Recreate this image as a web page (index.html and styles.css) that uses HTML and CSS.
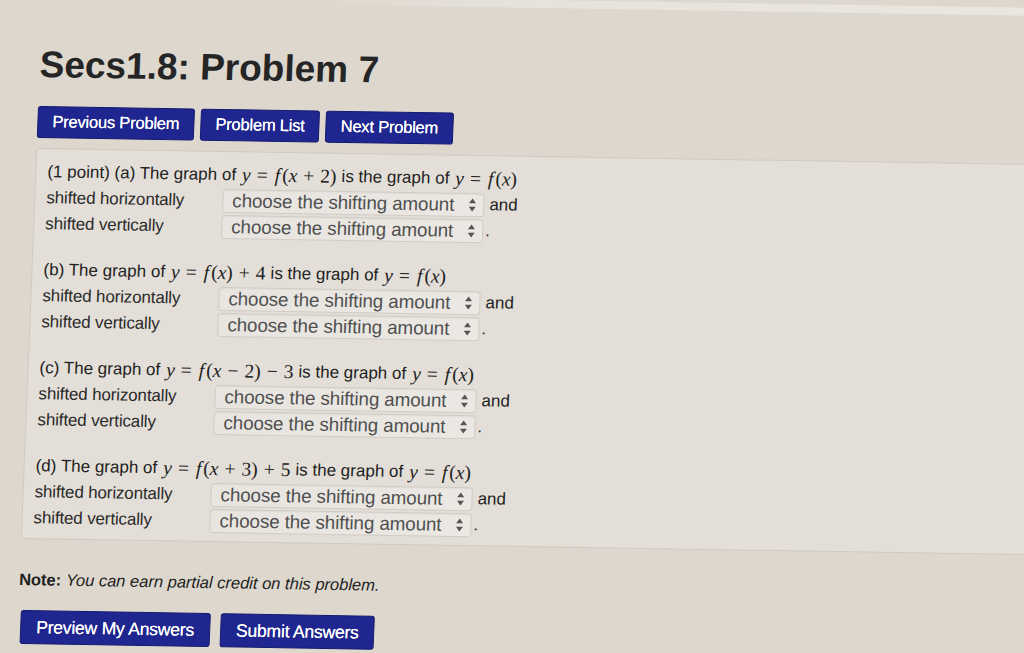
FILE: index.html
```html
<!DOCTYPE html>
<html lang="en">
<head>
<meta charset="utf-8">
<title>Secs1.8: Problem 7</title>
<link rel="stylesheet" href="styles.css">
</head>
<body>
<div class="page">
  <div class="topband"></div>
  <h1 class="title">Secs1.8: Problem 7</h1>
  <div class="nav">
    <button class="btn">Previous Problem</button>
    <button class="btn">Problem List</button>
    <button class="btn">Next Problem</button>
  </div>

  <div class="problem">
    <div class="part">
      <div class="row">(1 point) (a) The graph of <span class="m"><i>y</i><span class="op">=</span><i class="f">f</i>(<i>x</i><span class="op">+</span>2)</span> is the graph of <span class="m"><i>y</i><span class="op">=</span><i class="f">f</i>(<i>x</i>)</span></div>
      <div class="row"><span class="lbl">shifted horizontally</span><span class="sel">choose the shifting amount<svg class="arr" viewBox="0 0 8 14"><path d="M4 0.5L7.5 5.2H0.5Z M4 13.5L7.5 8.8H0.5Z"/></svg></span><span class="after">and</span></div>
      <div class="row"><span class="lbl">shifted vertically</span><span class="sel">choose the shifting amount<svg class="arr" viewBox="0 0 8 14"><path d="M4 0.5L7.5 5.2H0.5Z M4 13.5L7.5 8.8H0.5Z"/></svg></span><span class="dot">.</span></div>
    </div>
    <div class="part">
      <div class="row">(b) The graph of <span class="m"><i>y</i><span class="op">=</span><i class="f">f</i>(<i>x</i>)<span class="op">+</span>4</span> is the graph of <span class="m"><i>y</i><span class="op">=</span><i class="f">f</i>(<i>x</i>)</span></div>
      <div class="row"><span class="lbl">shifted horizontally</span><span class="sel">choose the shifting amount<svg class="arr" viewBox="0 0 8 14"><path d="M4 0.5L7.5 5.2H0.5Z M4 13.5L7.5 8.8H0.5Z"/></svg></span><span class="after">and</span></div>
      <div class="row"><span class="lbl">shifted vertically</span><span class="sel">choose the shifting amount<svg class="arr" viewBox="0 0 8 14"><path d="M4 0.5L7.5 5.2H0.5Z M4 13.5L7.5 8.8H0.5Z"/></svg></span><span class="dot">.</span></div>
    </div>
    <div class="part">
      <div class="row">(c) The graph of <span class="m"><i>y</i><span class="op">=</span><i class="f">f</i>(<i>x</i><span class="op">&minus;</span>2)<span class="op">&minus;</span>3</span> is the graph of <span class="m"><i>y</i><span class="op">=</span><i class="f">f</i>(<i>x</i>)</span></div>
      <div class="row"><span class="lbl">shifted horizontally</span><span class="sel">choose the shifting amount<svg class="arr" viewBox="0 0 8 14"><path d="M4 0.5L7.5 5.2H0.5Z M4 13.5L7.5 8.8H0.5Z"/></svg></span><span class="after">and</span></div>
      <div class="row"><span class="lbl">shifted vertically</span><span class="sel">choose the shifting amount<svg class="arr" viewBox="0 0 8 14"><path d="M4 0.5L7.5 5.2H0.5Z M4 13.5L7.5 8.8H0.5Z"/></svg></span><span class="dot">.</span></div>
    </div>
    <div class="part">
      <div class="row">(d) The graph of <span class="m"><i>y</i><span class="op">=</span><i class="f">f</i>(<i>x</i><span class="op">+</span>3)<span class="op">+</span>5</span> is the graph of <span class="m"><i>y</i><span class="op">=</span><i class="f">f</i>(<i>x</i>)</span></div>
      <div class="row"><span class="lbl">shifted horizontally</span><span class="sel">choose the shifting amount<svg class="arr" viewBox="0 0 8 14"><path d="M4 0.5L7.5 5.2H0.5Z M4 13.5L7.5 8.8H0.5Z"/></svg></span><span class="after">and</span></div>
      <div class="row"><span class="lbl">shifted vertically</span><span class="sel">choose the shifting amount<svg class="arr" viewBox="0 0 8 14"><path d="M4 0.5L7.5 5.2H0.5Z M4 13.5L7.5 8.8H0.5Z"/></svg></span><span class="dot">.</span></div>
    </div>
  </div>

  <p class="note"><b>Note:</b> <em>You can earn partial credit on this problem.</em></p>

  <div class="actions">
    <button class="btn btn-lg">Preview My Answers</button>
    <button class="btn btn-lg">Submit Answers</button>
  </div>
</div>
</body>
</html>
```

FILE: styles.css
```css
html, body {
  margin: 0;
  padding: 0;
  height: 100%;
  overflow: hidden;
  background: #ddd7cd;
}

.page {
  width: 1200px;
  min-height: 760px;
  padding-left: 40px;
  background: #ddd7cd;
  font-family: "Liberation Sans", Arial, sans-serif;
  color: #222;
  transform-origin: 40px 65px;
  transform: matrix(1, 0.016, -0.04, 1, 0, 0);
  box-sizing: border-box;
}

.topband {
  height: 8px;
  margin: -8px 0 0 260px;
  background: linear-gradient(90deg, rgba(233,229,222,0) 0%, #e7e3dc 25%, #eae7e1 100%);
}

.title {
  margin: 45px 0 0 0;
  font-size: 37px;
  line-height: 40px;
  font-weight: bold;
  color: #252525;
}

.nav {
  display: flex;
  gap: 6px;
  margin-top: 21px;
}

.btn {
  height: 32px;
  padding: 0 14px;
  border: 1px solid #141a70;
  border-radius: 3px;
  background: #1f268f;
  color: #fff;
  font-family: "Liberation Sans", Arial, sans-serif;
  font-size: 16.6px;
  letter-spacing: -0.25px;
  line-height: 30px;
  text-shadow: 0 0 0.4px #fff;
}

.problem {
  margin-top: 10px;
  width: 1150px;
  padding: 10px 12px 7px 11px;
  background: #e3dfd8;
  border: 1px solid #d0cac0;
  border-radius: 4px;
  box-sizing: border-box;
  font-size: 17px;
}

.part + .part {
  margin-top: 20px;
}

.row {
  height: 26px;
  display: flex;
  align-items: center;
  white-space: nowrap;
}

.m {
  font-family: "Liberation Serif", "Times New Roman", serif;
  font-size: 19.5px;
  margin: 0 5px 0 6px;
}

.m i {
  font-style: italic;
}

.m .f {
  margin: 0 2px 0 1px;
}

.op {
  margin: 0 6px;
}

.lbl {
  width: 176px;
  color: #2a2a2a;
  letter-spacing: -0.15px;
}

.sel {
  width: 262px;
  height: 24px;
  box-sizing: border-box;
  display: flex;
  align-items: center;
  justify-content: space-between;
  padding: 0 7px 0 9px;
  background: linear-gradient(90deg, #e8e5e0 0%, #ebe8e3 100%);
  border: 1px solid #d1ccc4;
  border-radius: 4px;
  box-shadow: inset 0 1px 1px rgba(0,0,0,0.04);
  color: #505050;
  font-size: 18.8px;
  letter-spacing: -0.1px;
}

.arr {
  flex-shrink: 0;
  width: 8px;
  height: 14px;
  fill: #555;
}

.after {
  margin-left: 5px;
}

.dot {
  margin-left: 2px;
}

.note {
  margin: 30px 0 0 0;
  font-size: 16.5px;
  line-height: 20px;
  color: #222;
}

.note em {
  font-style: italic;
}

.actions {
  display: flex;
  gap: 10px;
  margin-top: 21px;
  padding-left: 3px;
}

.btn-lg {
  height: 34px;
  padding: 0 15px;
  font-size: 17.6px;
  line-height: 32px;
}
```
